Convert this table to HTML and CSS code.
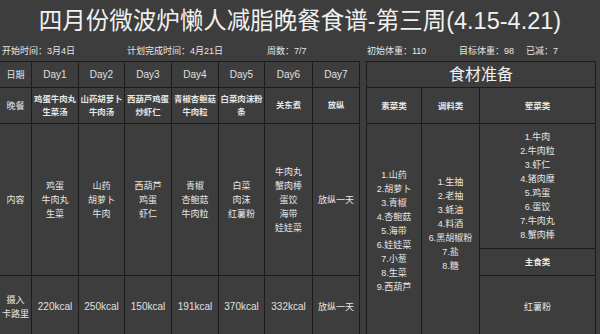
FILE: index.html
```html
<!DOCTYPE html>
<html lang="zh-CN">
<head>
<meta charset="utf-8">
<title>四月份微波炉懒人减脂晚餐食谱</title>
<link rel="stylesheet" href="styles.css">
</head>
<body>
<div class="page">
  <h1 class="title">四月份微波炉懒人减脂晚餐食谱-第三周(4.15-4.21)</h1>
  <div class="info">
    <span>开始时间：3月4日</span>
    <span>计划完成时间：4月21日</span>
    <span>周数：7/7</span>
    <span>初始体重：110</span>
    <span>目标体重：98</span>
    <span>已减：7</span>
  </div>
  <div class="sheet">
    <div class="plan">
      <div class="cell head">日期</div>
      <div class="cell en">Day1</div>
      <div class="cell en">Day2</div>
      <div class="cell en">Day3</div>
      <div class="cell en">Day4</div>
      <div class="cell en">Day5</div>
      <div class="cell en">Day6</div>
      <div class="cell en">Day7</div>

      <div class="cell head">晚餐</div>
      <div class="cell dish">鸡蛋牛肉丸<br>生菜汤</div>
      <div class="cell dish">山药胡萝卜<br>牛肉汤</div>
      <div class="cell dish">西葫芦鸡蛋<br>炒虾仁</div>
      <div class="cell dish">青椒杏鲍菇<br>牛肉粒</div>
      <div class="cell dish">白菜肉沫粉<br>条</div>
      <div class="cell dish">关东煮</div>
      <div class="cell dish">放纵</div>

      <div class="cell head">内容</div>
      <div class="cell list">鸡蛋<br>牛肉丸<br>生菜</div>
      <div class="cell list">山药<br>胡萝卜<br>牛肉</div>
      <div class="cell list">西葫芦<br>鸡蛋<br>虾仁</div>
      <div class="cell list">青椒<br>杏鲍菇<br>牛肉粒</div>
      <div class="cell list">白菜<br>肉沫<br>红薯粉</div>
      <div class="cell list">牛肉丸<br>蟹肉棒<br>蛋饺<br>海带<br>娃娃菜</div>
      <div class="cell list">放纵一天</div>

      <div class="cell head">摄入<br>卡路里</div>
      <div class="cell en">220kcal</div>
      <div class="cell en">250kcal</div>
      <div class="cell en">150kcal</div>
      <div class="cell en">191kcal</div>
      <div class="cell en">370kcal</div>
      <div class="cell en">332kcal</div>
      <div class="cell list">放纵一天</div>
    </div>

    <div class="stock">
      <div class="cell stock-title">食材准备</div>
      <div class="cell sub">素菜类</div>
      <div class="cell sub">调料类</div>
      <div class="cell sub">荤菜类</div>
      <div class="cell list tall">1.山药<br>2.胡萝卜<br>3.青椒<br>4.杏鲍菇<br>5.海带<br>6.娃娃菜<br>7.小葱<br>8.生菜<br>9.西葫芦</div>
      <div class="cell list tall spice">1.生抽<br>2.老抽<br>3.蚝油<br>4.料酒<br>6.黑胡椒粉<br>7.盐<br>8.糖</div>
      <div class="cell list">1.牛肉<br>2.牛肉粒<br>3.虾仁<br>4.猪肉糜<br>5.鸡蛋<br>6.蛋饺<br>7.牛肉丸<br>8.蟹肉棒</div>
      <div class="cell sub">主食类</div>
      <div class="cell list">红薯粉</div>
    </div>
  </div>
</div>
</body>
</html>
```

FILE: styles.css
```css
* { box-sizing: border-box; }

html, body {
  margin: 0;
  padding: 0;
  background: #3d3d3d;
  overflow: hidden;
}

body {
  width: 600px;
  height: 334px;
  color: #e6e6e6;
  font-family: "Liberation Sans", "Noto Sans CJK SC", sans-serif;
  font-size: 9px;
}

.page {
  width: 600px;
}

.title {
  margin: 0;
  height: 40px;
  padding-top: 2px;
  line-height: 38px;
  text-align: center;
  font-size: 23.5px;
  font-weight: normal;
  color: #f0f0f0;
  white-space: nowrap;
}

.info {
  height: 21px;
  display: grid;
  grid-template-columns: 125px 140px 100px 92px 67px auto;
  align-items: center;
  padding-left: 2px;
  font-size: 9px;
  white-space: nowrap;
}

.sheet {
  display: flex;
  gap: 6px;
  align-items: flex-start;
}

.cell {
  display: flex;
  align-items: center;
  justify-content: center;
  text-align: center;
  border-right: 1px solid #1c1c1c;
  border-bottom: 1px solid #1c1c1c;
  line-height: 14px;
  overflow: hidden;
}

.plan {
  display: grid;
  grid-template-columns: 32px 47px 46px 47px 47px 46px 48px 47px;
  grid-template-rows: 26px 36px 152px 62px;
  border-top: 1px solid #1c1c1c;
  width: 360px;
}

.head {
  font-size: 9px;
}

.en {
  font-size: 10px;
  color: #e0e0e0;
}

.dish {
  font-size: 8.4px;
  font-weight: bold;
  line-height: 13px;
}

.list {
  font-size: 9px;
  line-height: 14px;
}

.stock {
  display: grid;
  grid-template-columns: 55px 58px 116px;
  grid-template-rows: 26px 36px 125px 27px 62px;
  border-top: 1px solid #1c1c1c;
  border-left: 1px solid #1c1c1c;
  width: 230px;
}

.stock-title {
  grid-column: 1 / 4;
  font-size: 16px;
  color: #f0f0f0;
}

.sub {
  font-size: 8.5px;
  font-weight: bold;
}

.tall {
  grid-row: 3 / 6;
}

.spice {
  padding-bottom: 14px;
}
```
